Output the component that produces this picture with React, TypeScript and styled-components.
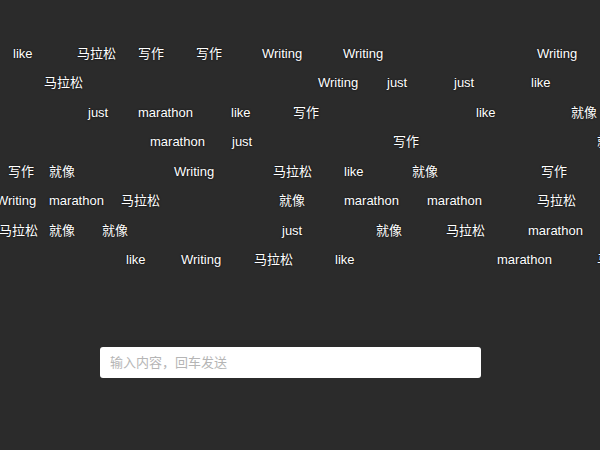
import React from 'react'
import styled, { createGlobalStyle } from 'styled-components'

const GlobalStyle = createGlobalStyle`
  html, body {
    margin: 0;
    padding: 0;
    background: #2b2b2b;
  }
  * {
    box-sizing: border-box;
  }
`

type Bullet = { text: string; x: number }

const lanes: Bullet[][] = [
  [
    { text: 'like', x: 13 },
    { text: '马拉松', x: 77 },
    { text: '写作', x: 138 },
    { text: '写作', x: 196 },
    { text: 'Writing', x: 262 },
    { text: 'Writing', x: 343 },
    { text: 'Writing', x: 537 },
  ],
  [
    { text: '马拉松', x: 44 },
    { text: 'Writing', x: 318 },
    { text: 'just', x: 387 },
    { text: 'just', x: 454 },
    { text: 'like', x: 531 },
  ],
  [
    { text: 'just', x: 88 },
    { text: 'marathon', x: 138 },
    { text: 'like', x: 231 },
    { text: '写作', x: 293 },
    { text: 'like', x: 476 },
    { text: '就像', x: 571 },
  ],
  [
    { text: 'marathon', x: 150 },
    { text: 'just', x: 232 },
    { text: '写作', x: 393 },
    { text: '就像', x: 597 },
  ],
  [
    { text: '写作', x: 8 },
    { text: '就像', x: 49 },
    { text: 'Writing', x: 174 },
    { text: '马拉松', x: 273 },
    { text: 'like', x: 344 },
    { text: '就像', x: 412 },
    { text: '写作', x: 541 },
  ],
  [
    { text: 'Writing', x: -4 },
    { text: 'marathon', x: 49 },
    { text: '马拉松', x: 121 },
    { text: '就像', x: 279 },
    { text: 'marathon', x: 344 },
    { text: 'marathon', x: 427 },
    { text: '马拉松', x: 537 },
  ],
  [
    { text: '马拉松', x: -1 },
    { text: '就像', x: 49 },
    { text: '就像', x: 102 },
    { text: 'just', x: 282 },
    { text: '就像', x: 376 },
    { text: '马拉松', x: 446 },
    { text: 'marathon', x: 528 },
  ],
  [
    { text: 'like', x: 126 },
    { text: 'Writing', x: 181 },
    { text: '马拉松', x: 254 },
    { text: 'like', x: 335 },
    { text: 'marathon', x: 497 },
    { text: '马拉松', x: 597 },
  ],
]

const Page = styled.div`
  width: 600px;
  height: 450px;
  overflow: hidden;
  display: flex;
  flex-direction: column;
  font-family: 'Liberation Sans', 'Noto Sans CJK SC', sans-serif;
`

const Stage = styled.div`
  display: flex;
  flex-direction: column;
  padding-top: 38.5px;
`

const Lane = styled.div`
  position: relative;
  height: 29.5px;
`

const BulletText = styled.span`
  position: absolute;
  top: 0;
  line-height: 29.5px;
  font-size: 13px;
  color: #fff;
  white-space: nowrap;
  text-shadow: 0 0 2px rgba(0, 0, 0, 0.9);
`

const InputBar = styled.div`
  margin-top: 72.5px;
  padding-left: 100px;
`

const TextInput = styled.input`
  width: 381px;
  height: 31px;
  border: none;
  border-radius: 3px;
  background: #fff;
  padding: 0 10px;
  font-family: 'Liberation Sans', 'Noto Sans CJK SC', sans-serif;
  font-size: 13px;
  color: #333;
  outline: none;

  &::placeholder {
    color: #b5b5b5;
  }
`

export default function App() {
  return (
    <Page>
      <GlobalStyle />
      <Stage>
        {lanes.map((lane, i) => (
          <Lane key={i}>
            {lane.map((b, j) => (
              <BulletText key={j} style={{ left: b.x }}>
                {b.text}
              </BulletText>
            ))}
          </Lane>
        ))}
      </Stage>
      <InputBar>
        <TextInput placeholder="输入内容，回车发送" />
      </InputBar>
    </Page>
  )
}
